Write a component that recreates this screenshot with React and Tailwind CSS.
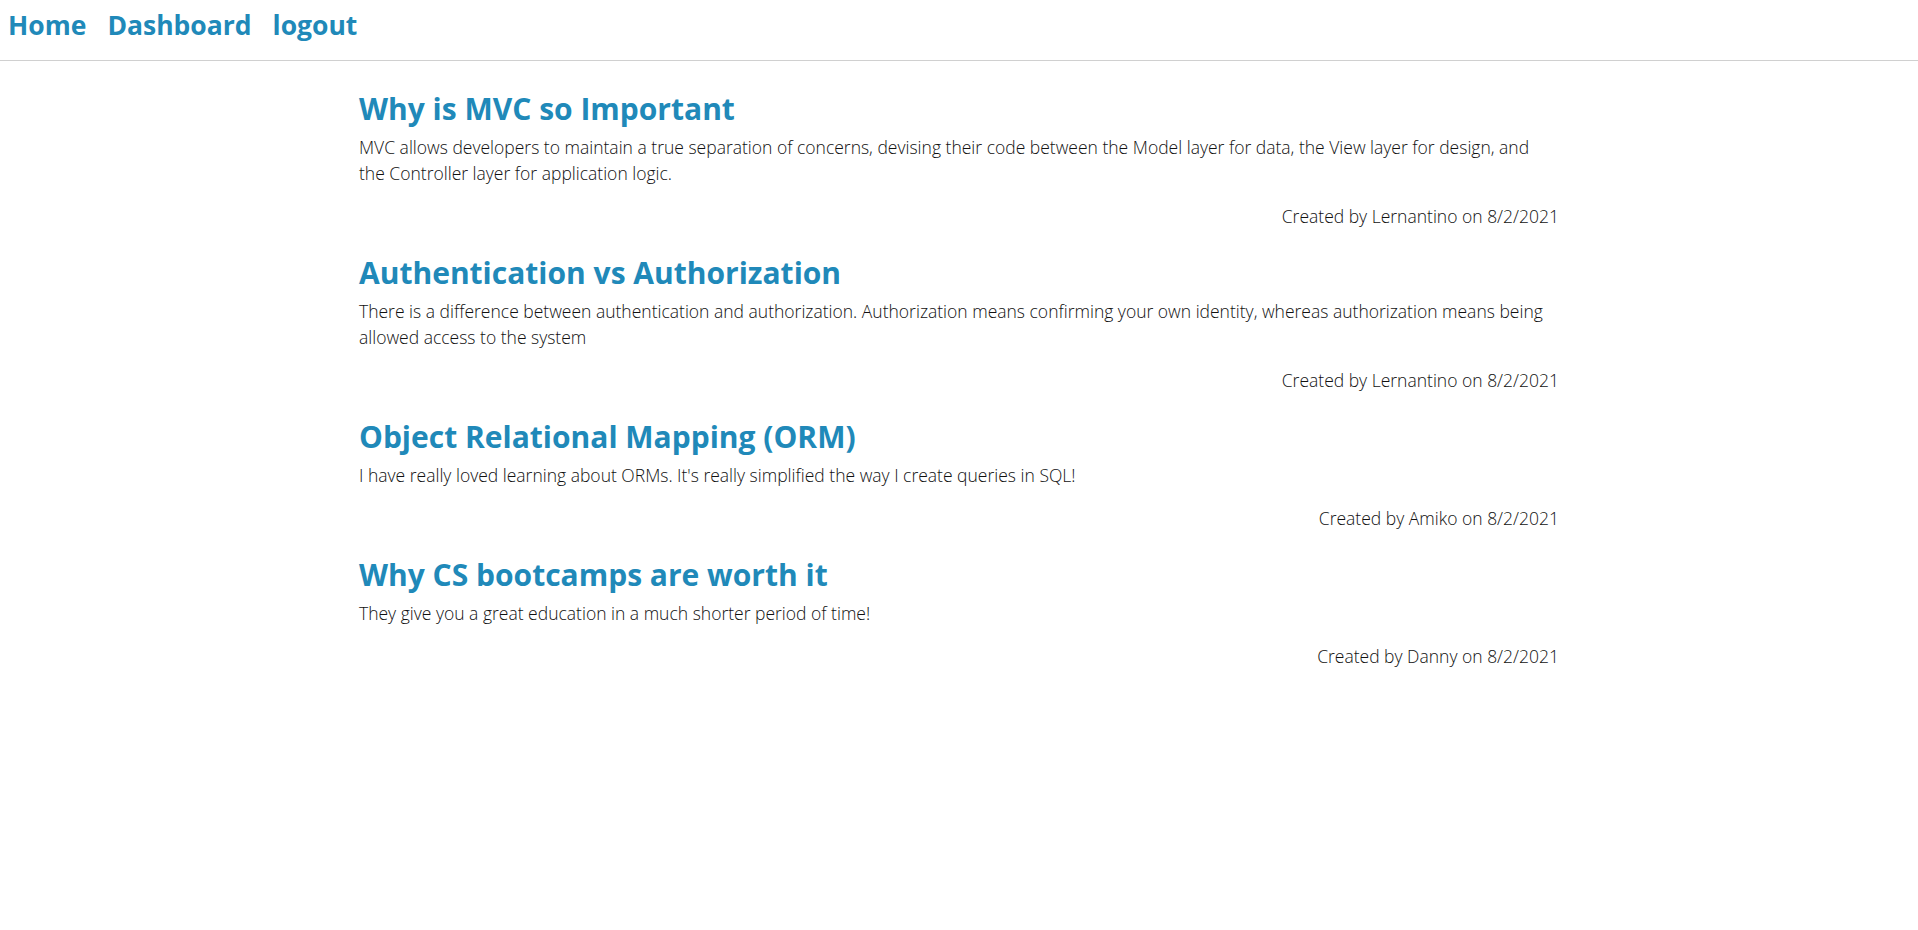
const posts = [
  {
    title: 'Why is MVC so Important',
    body: 'MVC allows developers to maintain a true separation of concerns, devising their code between the Model layer for data, the View layer for design, and the Controller layer for application logic.',
    author: 'Lernantino',
    date: '8/2/2021',
  },
  {
    title: 'Authentication vs Authorization',
    body: 'There is a difference between authentication and authorization. Authorization means confirming your own identity, whereas authorization means being allowed access to the system',
    author: 'Lernantino',
    date: '8/2/2021',
  },
  {
    title: 'Object Relational Mapping (ORM)',
    body: "I have really loved learning about ORMs. It's really simplified the way I create queries in SQL!",
    author: 'Amiko',
    date: '8/2/2021',
  },
  {
    title: 'Why CS bootcamps are worth it',
    body: 'They give you a great education in a much shorter period of time!',
    author: 'Danny',
    date: '8/2/2021',
  },
]

export default function App() {
  return (
    <div className="min-h-screen bg-white font-['Open_Sans',sans-serif] text-black">
      <nav className="flex h-[61px] items-center gap-[21px] border-b border-[#d0d0d0] px-2 pb-2">
        <a href="#" className="text-[26.5px] font-bold text-[#2089b9]">Home</a>
        <a href="#" className="text-[26.5px] font-bold text-[#2089b9]">Dashboard</a>
        <a href="#" className="text-[26.5px] font-bold text-[#2089b9]">logout</a>
      </nav>

      <main className="mx-auto w-[1200px] pt-[27px]">
        {posts.map((post) => (
          <Post key={post.title} {...post} />
        ))}
      </main>
    </div>
  )
}

function Post({ title, body, author, date }) {
  return (
    <article className="mb-[23px]">
      <h2 className="text-[30px] font-bold leading-[42px] text-[#2089b9]">{title}</h2>
      <p className="mt-[4px] text-[17.5px] font-light leading-[26px] text-[#111]">{body}</p>
      <p className="mt-[17px] text-right text-[17.5px] font-light leading-[26px] text-[#111]">
        Created by {author} on {date}
      </p>
    </article>
  )
}
